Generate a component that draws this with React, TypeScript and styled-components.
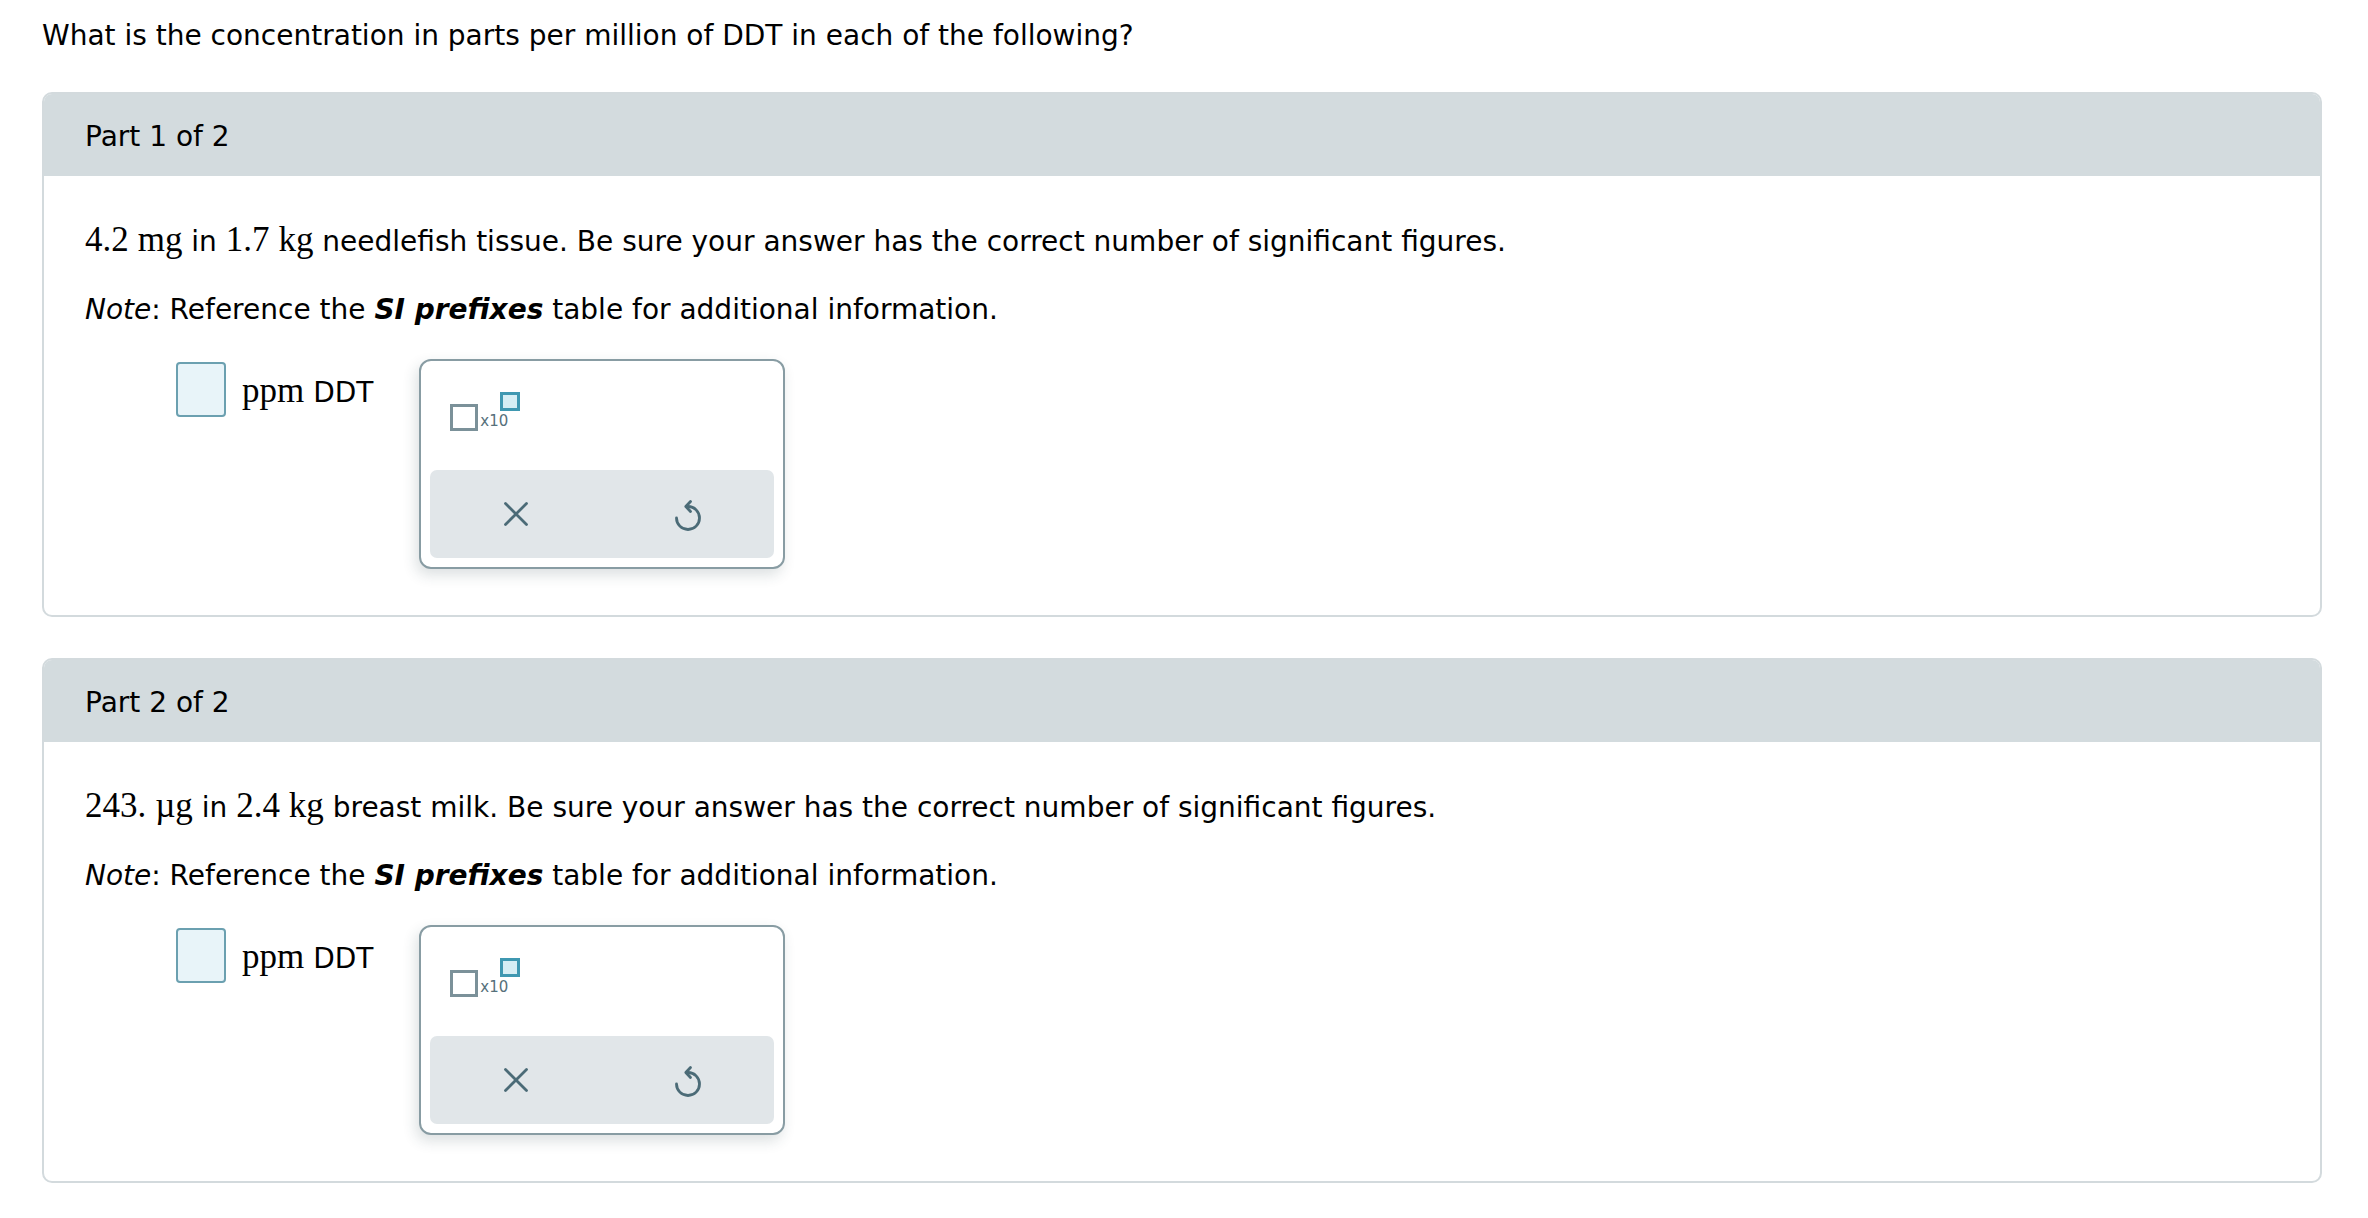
import React from "react";
import styled, { createGlobalStyle } from "styled-components";

const GlobalStyle = createGlobalStyle`
  body {
    margin: 0;
    background: #fff;
    color: #000;
    font-family: "DejaVu Sans", Verdana, sans-serif;
  }
`;

interface PartData {
  label: string;
  amount: string;
  amountUnit: string;
  mass: string;
  rest: string;
}

const parts: PartData[] = [
  {
    label: "Part 1 of 2",
    amount: "4.2",
    amountUnit: "mg",
    mass: "1.7",
    rest: "needlefish tissue. Be sure your answer has the correct number of significant figures.",
  },
  {
    label: "Part 2 of 2",
    amount: "243.",
    amountUnit: "\u00b5g",
    mass: "2.4",
    rest: "breast milk. Be sure your answer has the correct number of significant figures.",
  },
];

const CloseIcon = () => (
  <svg width="26" height="26" viewBox="0 0 26 26" fill="none">
    <path d="M2.5 2.5L23.5 23.5M23.5 2.5L2.5 23.5" stroke="#4b6b77" strokeWidth="2.8" strokeLinecap="round" />
  </svg>
);

const UndoIcon = () => (
  <svg width="32" height="34" viewBox="0 0 32 34" fill="none">
    <path
      d="M4.5 21a11.5 11.5 0 1 0 11.5-11.5"
      stroke="#4b6b77"
      strokeWidth="2.8"
      strokeLinecap="round"
    />
    <path
      d="M18.5 4.5L13.8 9.5L18.5 14.5"
      stroke="#4b6b77"
      strokeWidth="2.8"
      strokeLinecap="round"
      strokeLinejoin="round"
    />
  </svg>
);

const App: React.FC = () => {
  return (
    <Page>
      <GlobalStyle />
      <Title>What is the concentration in parts per million of DDT in each of the following?</Title>
      {parts.map((p) => (
        <Card key={p.label}>
          <CardHeader>{p.label}</CardHeader>
          <CardBody>
            <Question>
              <Serif>{p.amount}</Serif> <Serif>{p.amountUnit}</Serif> in <Serif>{p.mass}</Serif>{" "}
              <Serif>kg</Serif> {p.rest}
            </Question>
            <Note>
              <em>Note</em>: Reference the <strong>SI prefixes</strong> table for additional information.
            </Note>
            <AnswerRow>
              <AnswerInput />
              <UnitLabel>
                <Serif>ppm</Serif> DDT
              </UnitLabel>
              <Keypad>
                <KeypadTop>
                  <SciWidget>
                    <BaseBox />
                    <TimesTen>x10</TimesTen>
                    <ExpBox />
                  </SciWidget>
                </KeypadTop>
                <ActionBar>
                  <ActionButton aria-label="clear">
                    <CloseIcon />
                  </ActionButton>
                  <ActionButton aria-label="undo">
                    <UndoIcon />
                  </ActionButton>
                </ActionBar>
              </Keypad>
            </AnswerRow>
          </CardBody>
        </Card>
      ))}
    </Page>
  );
};

const Page = styled.div`
  padding: 16px 46px 20px 42px;
`;

const Title = styled.div`
  font-size: 28px;
  line-height: 40px;
  margin-bottom: 36px;
`;

const Card = styled.section`
  border: 2px solid #d3dadd;
  border-radius: 10px;
  overflow: hidden;
  margin-bottom: 41px;
`;

const CardHeader = styled.div`
  background: #d3dbde;
  height: 80px;
  margin: -2px -2px 0;
  padding: 4px 0 0 43px;
  display: flex;
  align-items: center;
  font-size: 28px;
`;

const CardBody = styled.div`
  padding: 44px 41px 46px;
`;

const Question = styled.p`
  margin: 0;
  font-size: 28px;
  line-height: 40px;
`;

const Note = styled.p`
  margin: 28px 0 0;
  font-size: 28px;
  line-height: 40px;

  strong {
    font-style: italic;
    font-weight: bold;
  }
`;

const Serif = styled.span`
  font-family: "Liberation Serif", "Times New Roman", serif;
  font-size: 35px;
`;

const AnswerRow = styled.div`
  display: flex;
  align-items: flex-start;
  margin: 29px 0 0 91px;
`;

const AnswerInput = styled.div`
  width: 46px;
  height: 51px;
  margin-top: 3px;
  border: 2px solid #6ba0b0;
  border-radius: 4px;
  background: #e8f4f9;
`;

const UnitLabel = styled.div`
  margin: 3px 46px 0 16px;
  font-size: 28px;
  line-height: 57px;
`;

const Keypad = styled.div`
  width: 344px;
  height: 197px;
  padding: 0 9px 9px;
  box-sizing: content-box;
  border: 2px solid #889ca3;
  border-radius: 12px;
  background: #fff;
  box-shadow: -3px 6px 14px rgba(40, 60, 70, 0.16);
  display: flex;
  flex-direction: column;
`;

const KeypadTop = styled.div`
  flex: 1;
  padding: 31px 0 0 20px;
`;

const SciWidget = styled.div`
  display: flex;
  align-items: flex-end;
  height: 39px;
`;

const BaseBox = styled.div`
  width: 22px;
  height: 21px;
  border: 3px solid #7b9199;
`;

const TimesTen = styled.span`
  font-size: 15px;
  line-height: 1;
  color: #56707b;
  margin: 0 0 2px 2px;
`;

const ExpBox = styled.div`
  align-self: flex-start;
  width: 14px;
  height: 13px;
  margin-left: -8px;
  border: 3px solid #3f98b1;
  background: #d6eef4;
`;

const ActionBar = styled.div`
  display: flex;
  height: 88px;
  border-radius: 7px;
  background: #e1e6e9;
`;

const ActionButton = styled.button`
  flex: 1;
  display: flex;
  align-items: center;
  justify-content: center;
  border: none;
  background: transparent;
  padding: 0;
  cursor: pointer;
`;

export default App;
